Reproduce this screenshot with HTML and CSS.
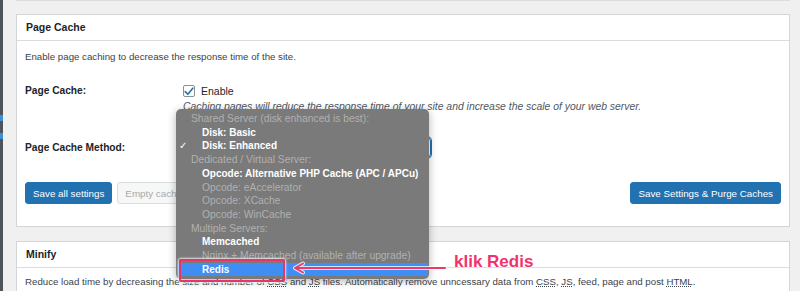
FILE: index.html
```html
<!DOCTYPE html>
<html>
<head>
    <title>Page Cache</title>
    <meta charset="utf-8">
    <link rel="stylesheet" href="styles.css">
</head>
<body>
<div id="screen">
    <div class="adminmenu">
        <span class="mark m1"></span>
        <span class="mark m2"></span>
    </div>
    <div class="main">
        <div class="prev"></div>

        <div class="postbox">
            <h3 class="hndle">Page Cache</h3>
            <div class="inside">
                <p class="intro">Enable page caching to decrease the response time of the site.</p>
                <div class="row">
                    <span class="label">Page Cache:</span>
                    <div class="field">
                        <label class="check">
                            <span class="box"><svg width="10" height="9" viewBox="0 0 10 9"><path d="M1.2 4.6 L3.9 7.3 L8.8 1.2" fill="none" stroke="#2271b1" stroke-width="1.6" stroke-linecap="round" stroke-linejoin="round"/></svg></span>
                            Enable
                        </label>
                        <p class="desc">Caching pages will reduce the response time of your site and increase the scale of your web server.</p>
                    </div>
                </div>
                <div class="row method">
                    <span class="label">Page Cache Method:</span>
                    <div class="field"><div class="select"></div></div>
                </div>
                <div class="actions">
                    <button class="btn primary">Save all settings</button>
                    <button class="btn disabled">Empty cache</button>
                    <span class="grow"></span>
                    <button class="btn primary">Save Settings &amp; Purge Caches</button>
                </div>
            </div>
        </div>

        <div class="postbox second">
            <h3 class="hndle">Minify</h3>
            <div class="inside">
                <p class="intro">Reduce load time by decreasing the size and number of <abbr>CSS</abbr> and <abbr>JS</abbr> files. Automatically remove unncessary data from <abbr>CSS</abbr>, <abbr>JS</abbr>, feed, page and post <abbr>HTML</abbr>.</p>
            </div>
        </div>
    </div>

    <!-- native select popup, open -->
    <div class="popup">
        <div class="grp">Shared Server (disk enhanced is best):</div>
        <div class="opt">Disk: Basic</div>
        <div class="opt sel">Disk: Enhanced</div>
        <div class="grp">Dedicated / Virtual Server:</div>
        <div class="opt">Opcode: Alternative PHP Cache (APC / APCu)</div>
        <div class="opt off">Opcode: eAccelerator</div>
        <div class="opt off">Opcode: XCache</div>
        <div class="opt off">Opcode: WinCache</div>
        <div class="grp">Multiple Servers:</div>
        <div class="opt">Memcached</div>
        <div class="opt off">Nginx + Memcached (available after upgrade)</div>
        <div class="opt hl">Redis</div>
    </div>

    <div class="redbox"></div>
    <svg class="arrow" width="160" height="14" viewBox="0 0 160 14">
        <g fill="none" stroke="#fff" stroke-width="4" stroke-linecap="round" stroke-linejoin="round" opacity="0.8">
            <path d="M6 7 H155"/><path d="M13 2.5 L5 7 L13 11.5"/>
        </g>
        <g fill="none" stroke="#ea3a6c" stroke-width="2" stroke-linecap="round" stroke-linejoin="round">
            <path d="M6 7 H155"/><path d="M13 2.5 L5 7 L13 11.5"/>
        </g>
    </svg>
    <div class="callout">klik Redis</div>
</div>
</body>
</html>
```

FILE: styles.css
```css
body{
    margin:0;
    background:#f0f0f1;
    font-family:"Liberation Sans", Arial, sans-serif;
    color:#2c3338;
}
#screen{
    position:relative;
    display:flex;
    width:800px;
    height:291px;
    overflow:hidden;
}
.adminmenu{
    width:3px;
    background:#4f545a;
    display:flex;
    flex-direction:column;
}
.mark{
    display:block;
    height:6px;
    background:#3f8fd6;
}
.m1{ margin-top:115px; }
.m2{ margin-top:12px; }

.main{
    flex:1;
    padding:0 10px 0 13px;
}
.prev{
    height:0;
    border-bottom:1px solid #dcdcde;
}
.postbox{
    margin-top:13px;
    background:#fff;
    border:1px solid #d4d5d8;
}
.postbox.second{
    margin-top:14px;
}
.hndle{
    margin:0;
    height:25px;
    line-height:25px;
    padding:0 9px;
    font-size:10.5px;
    font-weight:bold;
    color:#1d2327;
    border-bottom:1px solid #dcdcde;
}
.inside{
    padding:9px 8px 22px;
}
.second .inside{
    padding-top:7px;
}
.intro{
    margin:0;
    font-size:9.7px;
    line-height:14px;
    color:#3c434a;
    white-space:nowrap;
}
abbr{
    text-decoration:underline dotted;
}
.row{
    display:flex;
    margin-top:20px;
}
.row.method{
    margin-top:23px;
    align-items:center;
}
.label{
    width:158px;
    flex:none;
    font-size:10.2px;
    font-weight:bold;
    color:#1d2327;
    line-height:14px;
}
.check{
    display:flex;
    align-items:center;
    font-size:10.5px;
    line-height:14px;
    color:#1d2327;
}
.box{
    width:10px;
    height:10px;
    border:1px solid #8c8f94;
    border-radius:2px;
    margin-right:6px;
    display:flex;
    align-items:center;
    justify-content:center;
}
.desc{
    margin:2px 0 0;
    font-size:10.4px;
    line-height:14px;
    font-style:italic;
    color:#50575e;
}
.select{
    width:246px;
    height:19px;
    border:1px solid #2271b1;
    box-shadow:0 0 0 1px #2271b1;
    border-radius:4px;
}
.actions{
    display:flex;
    margin-top:24px;
    gap:5px;
}
.grow{ flex:1; }
.btn{
    height:22px;
    padding:0 7px;
    border-radius:3px;
    font-family:inherit;
    font-size:9.8px;
    border:1px solid #2271b1;
}
.primary{
    background:#2271b1;
    color:#fff;
}
.disabled{
    background:#f6f7f7;
    border-color:#dcdcde;
    color:#a7aaad;
    width:90px;
    text-align:left;
}

.popup{
    position:absolute;
    left:176px;
    top:109px;
    width:253px;
    height:170px;
    padding-top:3px;
    box-sizing:border-box;
    background:#7a7a7a;
    border-radius:5px;
    box-shadow:0 2px 8px rgba(0,0,0,0.3);
    font-size:10.3px;
    line-height:13.7px;
    white-space:nowrap;
}
.grp{
    padding-left:15px;
    color:#b0b0b0;
}
.opt{
    padding-left:26px;
    color:#fff;
    font-weight:bold;
    font-size:10px;
    position:relative;
}
.opt.off{
    font-weight:normal;
    font-size:10.3px;
    color:#b0b0b0;
}
.opt.sel:before{
    content:"\2713";
    position:absolute;
    left:3px;
    font-weight:normal;
}
.opt.hl{
    background:#3f8ef4;
    margin:0 1px;
    padding-left:25px;
}

.redbox{
    position:absolute;
    left:179px;
    top:259px;
    width:102px;
    height:19px;
    border:2px solid #e8336b;
    border-radius:2px;
    box-shadow:0 0 2px 1px rgba(255,255,255,0.8);
}
.arrow{
    position:absolute;
    left:290px;
    top:261px;
}
.callout{
    position:absolute;
    left:454px;
    top:252px;
    font-size:17px;
    font-weight:bold;
    color:#f0336c;
    text-shadow:0 0 2px #fff, 0 0 2px #fff;
}
```
